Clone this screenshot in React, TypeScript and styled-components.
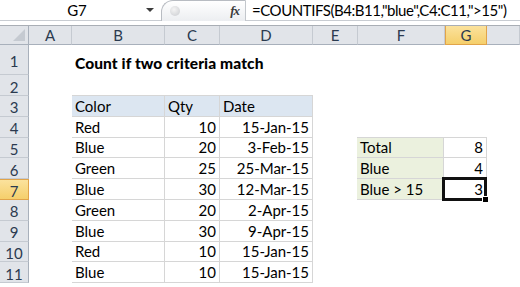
import React from "react";
import styled, { createGlobalStyle, css } from "styled-components";

const GlobalStyle = createGlobalStyle`
  html, body {
    margin: 0;
    padding: 0;
    background: #fff;
  }
  body {
    font-family: Lato, "Open Sans", sans-serif;
    color: #000;
    width: 520px;
    height: 287px;
    overflow: hidden;
  }
`;

const columns = ["A", "B", "C", "D", "E", "F", "G", ""];
const rows = [
  ["Red", "10", "15-Jan-15"],
  ["Blue", "20", "3-Feb-15"],
  ["Green", "25", "25-Mar-15"],
  ["Blue", "30", "12-Mar-15"],
  ["Green", "20", "2-Apr-15"],
  ["Blue", "30", "9-Apr-15"],
  ["Red", "10", "15-Jan-15"],
  ["Blue", "10", "15-Jan-15"],
];
const summary = [
  ["Total", "8"],
  ["Blue", "4"],
  ["Blue > 15", "3"],
];

export default function App() {
  return (
    <>
      <GlobalStyle />
      <FormulaBar>
        <NameBox>
          <NameText>G7</NameText>
          <DropArrow />
        </NameBox>
        <FxPill>
          <PillKnob />
          <Fx>fx</Fx>
        </FxPill>
        <Formula>=COUNTIFS(B4:B11,"blue",C4:C11,"&gt;15")</Formula>
      </FormulaBar>
      <Spacer />
      <Sheet>
        <Corner>
          <CornerTriangle />
        </Corner>
        {columns.map((c, i) => (
          <ColHead key={i} $active={c === "G"}>
            {c}
          </ColHead>
        ))}
        {Array.from({ length: 11 }, (_, i) => (
          <RowHead key={i} $row={i + 2} $active={i + 1 === 7}>
            {i + 1}
          </RowHead>
        ))}
        <Title>Count if two criteria match</Title>

        <DataTable>
          <Cell $head>Color</Cell>
          <Cell $head>Qty</Cell>
          <Cell $head>Date</Cell>
          {rows.map((r, i) => (
            <React.Fragment key={i}>
              <Cell>{r[0]}</Cell>
              <Cell $num>{r[1]}</Cell>
              <Cell $num>{r[2]}</Cell>
            </React.Fragment>
          ))}
        </DataTable>

        <Summary>
          {summary.map((s, i) => (
            <React.Fragment key={i}>
              <Cell $label>{s[0]}</Cell>
              <Cell $num>
                {s[1]}
                {i === 2 && (
                  <Selection>
                    <FillHandle />
                  </Selection>
                )}
              </Cell>
            </React.Fragment>
          ))}
        </Summary>
      </Sheet>
    </>
  );
}

const FormulaBar = styled.div`
  display: flex;
  align-items: stretch;
  height: 20px;
  border-bottom: 1px solid #c8ccd2;
  background: #fff;
`;

const NameBox = styled.div`
  width: 158px;
  display: flex;
  align-items: center;
`;

const NameText = styled.span`
  flex: 1;
  text-align: center;
  font-size: 15px;
  padding-left: 8px;
  margin-top: -1px;
`;

const DropArrow = styled.span`
  width: 0;
  height: 0;
  border-left: 4px solid transparent;
  border-right: 4px solid transparent;
  border-top: 4px solid #3c3c3c;
  margin-right: 4px;
`;

const FxPill = styled.div`
  width: 85px;
  margin: 0 0 -1px 3px;
  display: flex;
  align-items: center;
  justify-content: space-between;
  border: 1px solid #b8bcc2;
  border-bottom: none;
  border-right: 1px solid #c3c7cc;
  border-radius: 12px 0 0 0;
  background: linear-gradient(#ffffff, #eceef1);
  padding: 0 6px;
  box-sizing: border-box;
`;

const PillKnob = styled.span`
  width: 10px;
  height: 10px;
  border-radius: 50%;
  background: radial-gradient(circle at 40% 35%, #f4f4f4, #c9cbcf);
  margin-left: 2px;
`;

const Fx = styled.span`
  font-family: "Liberation Serif", serif;
  font-style: italic;
  font-weight: bold;
  font-size: 13px;
  color: #3b3b3b;
  letter-spacing: -1px;
`;

const Formula = styled.div`
  flex: 1;
  padding-left: 6px;
  font-size: 15px;
  line-height: 20px;
  white-space: nowrap;
  letter-spacing: -0.45px;
`;

const Spacer = styled.div`
  height: 4px;
  border-bottom: 1px solid #a9aeb5;
`;

const Sheet = styled.div`
  display: grid;
  grid-template-columns: 29px 43px 93px 55px 93px 45px 87px 42px 1fr;
  grid-template-rows: 19px 30px 21px repeat(9, 20.8px);
  font-size: 15px;
`;

const headBase = css`
  background: #e1e4e9;
  color: #2b3a4f;
  display: flex;
  align-items: center;
  justify-content: center;
  box-sizing: border-box;
`;

const activeHead = css`
  background: linear-gradient(#fbe29d, #f5cf6b);
`;

const Corner = styled.div`
  ${headBase};
  border-right: 1px solid #a8b0bb;
  border-bottom: 1px solid #a8b0bb;
  position: relative;
`;

const CornerTriangle = styled.span`
  position: absolute;
  right: 3px;
  bottom: 3px;
  width: 0;
  height: 0;
  border-left: 12px solid transparent;
  border-bottom: 12px solid #c5cad1;
`;

const ColHead = styled.div<{ $active?: boolean }>`
  ${headBase};
  border-right: 1px solid #c5cad1;
  border-bottom: 1px solid #a8b0bb;
  ${(p) =>
    p.$active &&
    css`
      ${activeHead};
      border: 1px solid #e1a44a;
      border-top: none;
    `}
`;

const RowHead = styled.div<{ $row: number; $active?: boolean }>`
  ${headBase};
  grid-column: 1;
  grid-row: ${(p) => p.$row};
  border-right: 1px solid #a8b0bb;
  border-bottom: 1px solid #c5cad1;
  padding-top: 3px;
  ${(p) =>
    p.$active &&
    css`
      ${activeHead};
      border: 1px solid #e1a44a;
      border-left: none;
    `}
`;

const Title = styled.div`
  grid-column: 3 / span 4;
  grid-row: 2;
  font-weight: 900;
  font-size: 15.5px;
  letter-spacing: 0.1px;
  display: flex;
  align-items: flex-end;
  padding: 0 0 3px 3px;
  white-space: nowrap;
`;

const DataTable = styled.div`
  grid-column: 3 / span 3;
  grid-row: 4 / span 9;
  display: grid;
  grid-template-columns: 92px 54px 1fr;
  grid-auto-rows: 1fr;
  gap: 1px;
  padding: 1px 1px 1px 0;
  background: #d6d6d6;
  margin-top: -1px;
`;

const Summary = styled.div`
  grid-column: 7 / span 2;
  grid-row: 6 / span 3;
  display: grid;
  grid-template-columns: 86px 1fr;
  grid-auto-rows: 1fr;
  gap: 1px;
  padding: 1px 1px 1px 0;
  background: #d6d6d6;
  margin-top: -1px;
  margin-left: -1px;
`;

const Cell = styled.div<{ $head?: boolean; $num?: boolean; $label?: boolean }>`
  background: ${(p) => (p.$head ? "#dce6f1" : p.$label ? "#ebf1de" : "#fff")};
  display: flex;
  align-items: flex-end;
  justify-content: ${(p) => (p.$num ? "flex-end" : "flex-start")};
  padding: 0 3px 1px 3px;
  white-space: nowrap;
  position: relative;
`;

const Selection = styled.div`
  position: absolute;
  inset: -2px -1px -2px -2px;
  border: 3px solid #111;
`;

const FillHandle = styled.span`
  position: absolute;
  right: -5px;
  bottom: -5px;
  width: 5px;
  height: 5px;
  background: #000;
  border: 1px solid #fff;
`;
